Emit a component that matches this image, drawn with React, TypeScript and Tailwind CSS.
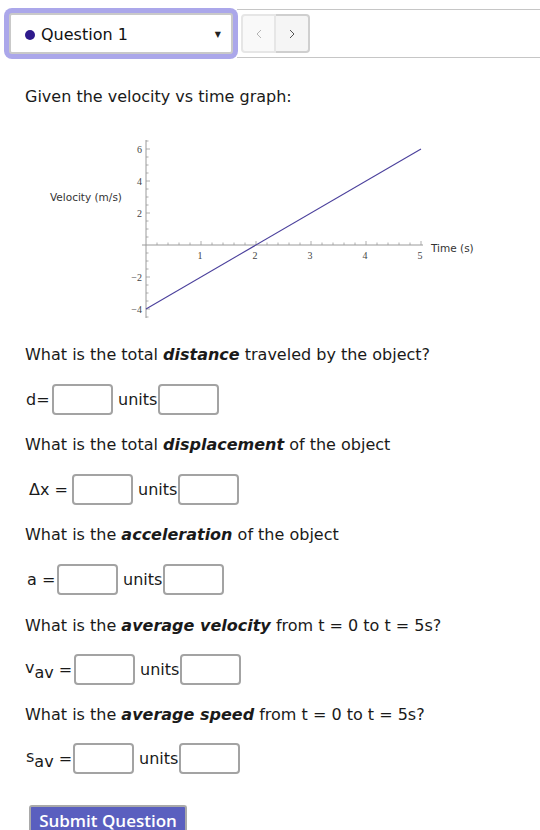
import React from 'react';

const font = { fontFamily: '"DejaVu Sans", "Noto Sans", sans-serif' };

function Box() {
  return <span className="inline-block w-[61px] h-[31px] rounded-[4px] border-2 border-[#a3a3a3] bg-white" />;
}

function AnswerRow({ label, labelWidth, pad }: { label: React.ReactNode; labelWidth: string; pad: string }) {
  return (
    <div className={`flex items-center h-[31px] ${pad}`}>
      <span className={`${labelWidth} shrink-0 leading-none`}>{label}</span>
      <Box />
      <span className="ml-[5px] mr-[1px]">units</span>
      <Box />
    </div>
  );
}

function Graph() {
  const x0 = 146;
  const y0 = 245;
  const ux = 55;
  const uy = 16;
  const xMinor: number[] = [];
  for (let i = 1; i <= 25; i++) xMinor.push(i);
  const yTicks: number[] = [];
  for (let i = -9; i <= 13; i++) if (i !== 0) yTicks.push(i);

  return (
    <svg width="540" height="190" viewBox="0 135 540 190" className="block">
      {/* axes */}
      <line x1={142} y1={y0} x2={423} y2={y0} stroke="#9a9a9a" strokeWidth={1} />
      <line x1={x0} y1={140} x2={x0} y2={318} stroke="#9a9a9a" strokeWidth={1} />
      {xMinor.map((i) => {
        const x = x0 + i * (ux / 5);
        const major = i % 5 === 0;
        return <line key={`x${i}`} x1={x} y1={y0} x2={x} y2={y0 - (major ? 4 : 2.5)} stroke="#9a9a9a" strokeWidth={0.8} />;
      })}
      {yTicks.map((i) => {
        const y = y0 - i * (uy / 2);
        const major = i % 4 === 0;
        return <line key={`y${i}`} x1={x0} y1={y} x2={x0 + (major ? 4 : 2.5)} y2={y} stroke="#9a9a9a" strokeWidth={0.8} />;
      })}
      {/* tick labels */}
      <g fontFamily='"Liberation Serif", "DejaVu Serif", serif' fontSize="10" fill="#444">
        {[6, 4, 2, -2, -4].map((v) => (
          <text key={v} x={142} y={y0 - v * uy + 3.5} textAnchor="end">
            {v < 0 ? `\u2212${-v}` : v}
          </text>
        ))}
        {[1, 2, 3, 4, 5].map((v) => (
          <text key={v} x={x0 + v * ux - 1} y={y0 + 14} textAnchor="middle">
            {v}
          </text>
        ))}
      </g>
      {/* data line */}
      <line x1={x0} y1={y0 + 4 * uy} x2={x0 + 5 * ux} y2={y0 - 6 * uy} stroke="#4b409c" strokeWidth={1.1} />
      {/* axis labels */}
      <g fontFamily='"DejaVu Sans", sans-serif' fontSize="10.5" fill="#333">
        <text x={50} y={201}>Velocity (m/s)</text>
        <text x={431} y={252}>Time (s)</text>
      </g>
    </svg>
  );
}

export default function App() {
  return (
    <div className="w-[540px] min-h-[830px] bg-white text-[16px] text-[#1a1a1a] overflow-hidden" style={font}>
      {/* Question selector toolbar */}
      <div className="flex mt-[8px] h-[51px]">
        <div className="ml-[4px] w-[234px] rounded-[8px] bg-[#aba7ea] p-[5px] relative z-10">
          <div className="h-full rounded-[3px] border-2 border-[#c9c9c9] bg-white flex items-center pl-[14px] pr-[10px] pt-[2px]">
            <span className="w-[10px] h-[10px] rounded-full bg-[#2e1a8c] mr-[6px]" />
            <span className="text-[16px] leading-none text-[#111]">Question 1</span>
            <span className="ml-auto text-[8px] text-[#222]">▼</span>
          </div>
        </div>
        <div className="flex-1 -ml-[1px] my-[1px] border-y border-[#c6c6c6] flex items-center pl-[4px]">
          <div className="flex h-[39px]">
            <button className="w-[35px] h-full rounded-l-[4px] border-2 border-[#e6e6e6] bg-[#f9f9f9] flex items-center justify-center">
              <svg width="6" height="10" viewBox="0 0 6 10">
                <path d="M5 1 L1 5 L5 9" fill="none" stroke="#b5b5b5" strokeWidth="1" />
              </svg>
            </button>
            <button className="w-[34px] h-full rounded-r-[4px] border-2 border-l-0 border-[#cfcfcf] bg-[#f5f5f5] flex items-center justify-center">
              <svg width="6" height="10" viewBox="0 0 6 10">
                <path d="M1 1 L5 5 L1 9" fill="none" stroke="#555" strokeWidth="1" />
              </svg>
            </button>
          </div>
        </div>
      </div>

      <div className="pl-[25px] mt-[26px] leading-[24px]">Given the velocity vs time graph:</div>

      <div className="mt-[26px]">
        <Graph />
      </div>

      <div className="pl-[25px] mt-[18px] leading-[24px]">
        What is the total <b><i>distance</i></b> traveled by the object?
      </div>
      <div className="mt-[17px]">
        <AnswerRow label="d=" labelWidth="w-[26px]" pad="pl-[26px]" />
      </div>

      <div className="pl-[25px] mt-[18px] leading-[24px]">
        What is the total <b><i>displacement</i></b> of the object
      </div>
      <div className="mt-[17px]">
        <AnswerRow label="Δx =" labelWidth="w-[43px]" pad="pl-[29px]" />
      </div>

      <div className="pl-[25px] mt-[18px] leading-[24px]">
        What is the <b><i>acceleration</i></b> of the object
      </div>
      <div className="mt-[17px]">
        <AnswerRow label="a =" labelWidth="w-[30px]" pad="pl-[27px]" />
      </div>

      <div className="pl-[25px] mt-[19px] leading-[24px]">
        What is the <b><i>average velocity</i></b> from t = 0 to t = 5s?
      </div>
      <div className="mt-[16px]">
        <AnswerRow
          label={
            <>
              <span className="relative -top-[2px]">v</span>
              <span className="relative top-[3px]">av</span>
              <span> =</span>
            </>
          }
          labelWidth="w-[49px]"
          pad="pl-[25px]"
        />
      </div>

      <div className="pl-[25px] mt-[18px] leading-[24px]">
        What is the <b><i>average speed</i></b> from t = 0 to t = 5s?
      </div>
      <div className="mt-[16px]">
        <AnswerRow
          label={
            <>
              <span className="relative -top-[2px]">s</span>
              <span className="relative top-[3px]">av</span>
              <span> =</span>
            </>
          }
          labelWidth="w-[47px]"
          pad="pl-[26px]"
        />
      </div>

      <div className="pl-[29px] mt-[31px]">
        <button
          className="w-[158px] h-[30px] rounded-t-[3px] border-2 border-b-0 border-[#a9a9a9] bg-[#5a5fbf] text-white text-[17px] font-semibold leading-[26px] text-center"
          style={{ fontFamily: '"Open Sans", sans-serif' }}
        >
          Submit Question
        </button>
      </div>
    </div>
  );
}
